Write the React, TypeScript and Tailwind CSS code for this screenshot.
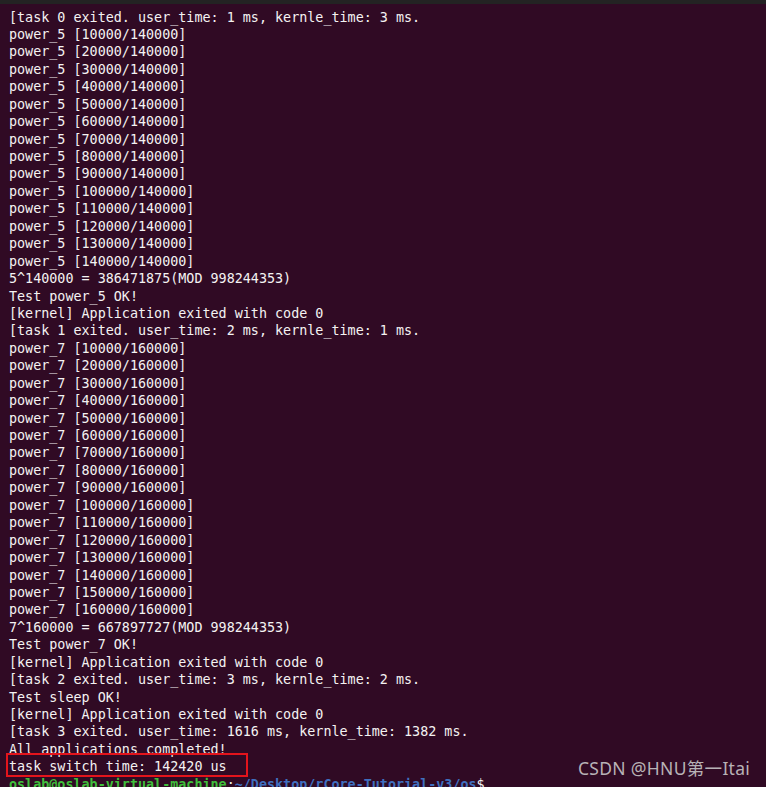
const lines: string[] = [
  "[task 0 exited. user_time: 1 ms, kernle_time: 3 ms.",
  ...[10000, 20000, 30000, 40000, 50000, 60000, 70000, 80000, 90000, 100000, 110000, 120000, 130000, 140000].map(
    (n) => `power_5 [${n}/140000]`
  ),
  "5^140000 = 386471875(MOD 998244353)",
  "Test power_5 OK!",
  "[kernel] Application exited with code 0",
  "[task 1 exited. user_time: 2 ms, kernle_time: 1 ms.",
  ...[10000, 20000, 30000, 40000, 50000, 60000, 70000, 80000, 90000, 100000, 110000, 120000, 130000, 140000, 150000, 160000].map(
    (n) => `power_7 [${n}/160000]`
  ),
  "7^160000 = 667897727(MOD 998244353)",
  "Test power_7 OK!",
  "[kernel] Application exited with code 0",
  "[task 2 exited. user_time: 3 ms, kernle_time: 2 ms.",
  "Test sleep OK!",
  "[kernel] Application exited with code 0",
  "[task 3 exited. user_time: 1616 ms, kernle_time: 1382 ms.",
  "All applications completed!",
];

export default function App() {
  return (
    <div className="relative w-[766px] h-[787px] overflow-hidden bg-[#300a24]">
      {/* window edge */}
      <div className="h-[4px] bg-[#232323]" />

      <div
        className="pt-[4.5px] pl-[9px] text-[13.4px] leading-[17.44px] text-[#f4f2f2] whitespace-pre"
        style={{ fontFamily: '"DejaVu Sans Mono", monospace' }}
      >
        {lines.map((l, i) => (
          <div key={i}>{l}</div>
        ))}

        <div className="relative w-fit">
          task switch time: 142420 us
          <span className="absolute -left-[3px] -top-[5px] w-[242px] h-[24px] border-2 border-[#e4141c]" />
        </div>

        <div>
          <span className="font-bold text-[#3fbf3c]">oslab@oslab-virtual-machine</span>
          <span>:</span>
          <span className="font-bold text-[#3f6fbf]">~/Desktop/rCore-Tutorial-v3/os</span>
          <span>$</span>
        </div>
      </div>

      {/* watermark */}
      <div
        className="absolute left-[578px] top-[757px] text-[17.5px] leading-[22px] tracking-[0.3px] text-[#b8b2b6]"
        style={{ fontFamily: '"Noto Sans", "Noto Sans CJK SC", sans-serif' }}
      >
        CSDN @HNU第一Itai
      </div>
    </div>
  );
}
